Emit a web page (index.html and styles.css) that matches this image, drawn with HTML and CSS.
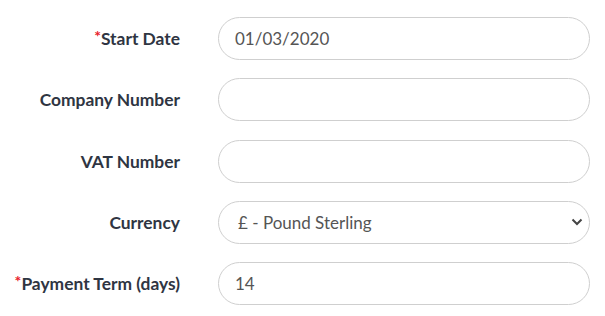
FILE: index.html
```html
<!DOCTYPE html>
<html>
<head>
<meta charset="utf-8">
<link rel="stylesheet" href="styles.css">
</head>
<body>
<form class="form">
  <div class="row">
    <label class="label"><span class="req">*</span>Start Date</label>
    <input class="control" type="text" value="01/03/2020">
  </div>
  <div class="row">
    <label class="label">Company Number</label>
    <input class="control" type="text" value="">
  </div>
  <div class="row">
    <label class="label">VAT Number</label>
    <input class="control" type="text" value="">
  </div>
  <div class="row">
    <label class="label">Currency</label>
    <div class="select">
      <span class="select-text">£ - Pound Sterling</span>
      <svg class="chevron" width="12" height="8" viewBox="0 0 12 8"><path d="M1.5 1.5 L6 6 L10.5 1.5" fill="none" stroke="#444" stroke-width="2"/></svg>
    </div>
  </div>
  <div class="row">
    <label class="label"><span class="req">*</span>Payment Term (days)</label>
    <input class="control" type="text" value="14">
  </div>
</form>
</body>
</html>
```
FILE: styles.css
```css
html, body {
  margin: 0;
  padding: 0;
  background: #fff;
}
.form {
  display: flex;
  flex-direction: column;
  gap: 18.25px;
  padding-top: 17px;
  font-family: Lato, "Open Sans", sans-serif;
}
.row {
  display: flex;
  align-items: center;
  gap: 38px;
}
.label {
  width: 180px;
  text-align: right;
  font-weight: bold;
  font-size: 17.4px;
  color: #2f3542;
}
.req {
  color: #e8202a;
  font-size: 16px;
  position: relative;
  top: -3px;
}
.control, .select {
  box-sizing: border-box;
  width: 372px;
  height: 43px;
  border: 1px solid #cfcfcf;
  border-radius: 22px;
  padding: 0 16px;
  font-family: Lato, "Open Sans", sans-serif;
  font-size: 17px;
  color: #555;
  background: #fff;
  outline: none;
  margin: 0;
}
.select {
  display: flex;
  align-items: center;
  justify-content: space-between;
  padding: 0 6px 0 19px;
}
.chevron {
  margin-right: 0;
}
```
